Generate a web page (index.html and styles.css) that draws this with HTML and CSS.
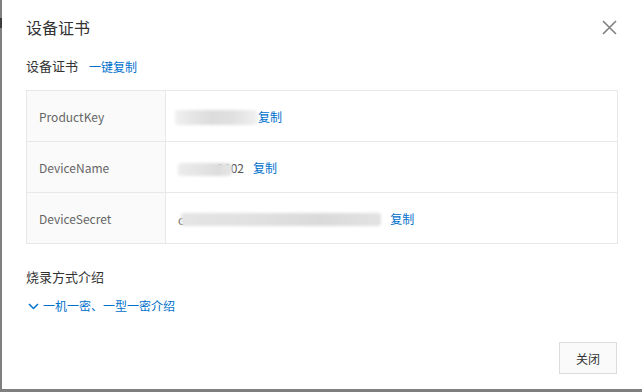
FILE: index.html
```html
<!DOCTYPE html>
<html lang="zh-CN">
<head>
<meta charset="utf-8">
<title>设备证书</title>
<link rel="stylesheet" href="styles.css">
</head>
<body>
<div class="dialog">
  <div class="header">
    <span class="title">设备证书</span>
    <svg class="close" width="15" height="15" viewBox="0 0 15 15"><path d="M1 1L14 14M14 1L1 14" stroke="#808080" stroke-width="1.6" fill="none"/></svg>
  </div>
  <div class="section-title">设备证书<a class="link copy-all">一键复制</a></div>
  <table class="cert">
    <tr>
      <td class="label">ProductKey</td>
      <td class="value"><span class="mask mask-1"></span><a class="link">复制</a></td>
    </tr>
    <tr>
      <td class="value-label label">DeviceName</td>
      <td class="value"><span class="masked-text"><span class="tail">2002</span><span class="mask mask-2"></span></span><a class="link">复制</a></td>
    </tr>
    <tr>
      <td class="label">DeviceSecret</td>
      <td class="value"><span class="lead">c</span><span class="mask mask-3"></span><a class="link">复制</a></td>
    </tr>
  </table>
  <div class="sub-title">烧录方式介绍</div>
  <div class="toggle"><svg width="11" height="7" viewBox="0 0 11 7"><path d="M1 1L5.5 5.5L10 1" stroke="#0070cc" stroke-width="1.5" fill="none"/></svg><span>一机一密、一型一密介绍</span></div>
  <div class="footer"><button class="btn">关闭</button></div>
</div>
</body>
</html>
```
FILE: styles.css
```css
html, body {
  margin: 0;
  padding: 0;
}
body {
  width: 642px;
  height: 392px;
  overflow: hidden;
  background: linear-gradient(to bottom, #7f7f7f 0, #7f7f7f 18px, #3c3c3c 18px, #3c3c3c 28px, #7f7f7f 28px);
  font-family: "Noto Sans CJK SC", "Noto Sans", sans-serif;
  color: #333;
}
.dialog {
  margin-left: 2px;
  height: 389px;
  background: #fff;
  padding: 0 25px 0 24px;
  box-sizing: border-box;
  display: flex;
  flex-direction: column;
}
.header {
  height: 54px;
  display: flex;
  align-items: center;
  justify-content: space-between;
}
.title {
  font-size: 16px;
  color: #333;
  line-height: 20px;
}
.section-title {
  height: 24px;
  line-height: 24px;
  font-size: 13px;
  color: #333;
  display: flex;
  align-items: center;
}
.link {
  color: #0070cc;
  font-size: 12px;
  cursor: pointer;
}
.copy-all {
  margin-left: 11px;
  margin-top: 2px;
}
.cert {
  margin-top: 12px;
  border-collapse: collapse;
  width: 592px;
  font-size: 12px;
}
.cert td {
  border: 1px solid #e8e8e8;
  height: 51px;
  padding: 0;
  box-sizing: border-box;
}
.label {
  width: 139px;
  background: #fafafa;
  padding-left: 12px !important;
  color: #666;
  font-size: 12px;
}
.value {
  padding-left: 9px !important;
  color: #333;
}
.value > * {
  vertical-align: middle;
}
.mask {
  display: inline-block;
  height: 15px;
  filter: blur(1.5px);
  border-radius: 3px;
}
.mask-1 {
  width: 82px;
  background: linear-gradient(to right, #f0f0f0 0, #e6e6e6 20%, #dcdcdc 45%, #e0e0e0 70%, #f0f0f0 100%);
  margin-right: 1px;
}
.masked-text {
  display: inline-block;
  position: relative;
  width: 66px;
  height: 16px;
  margin-left: 3px;
  margin-right: 9px;
}
.tail {
  position: absolute;
  right: 0;
  top: 0;
  font-size: 12px;
  line-height: 16px;
  color: #555;
}
.mask-2 {
  position: absolute;
  left: 0;
  top: 3px;
  width: 54px;
  height: 13px;
  background: linear-gradient(to right, #ececec 0, #e2e2e2 50%, #dcdcdc 75%, #e8e8e8 100%);
}
.lead {
  margin-left: 3px;
  color: #666;
}
.mask-3 {
  width: 200px;
  height: 13px;
  margin-left: -3px;
  margin-right: 9px;
  background: linear-gradient(to right, #e4e4e4 0, #e0e0e0 40%, #dadada 70%, #e2e2e2 100%);
}
.sub-title {
  margin-top: 23px;
  line-height: 20px;
  font-size: 13px;
  color: #333;
}
.toggle {
  margin-top: 9px;
  line-height: 20px;
  font-size: 12px;
  color: #0070cc;
  display: flex;
  align-items: center;
  gap: 4px;
  padding-left: 2px;
}
.footer {
  margin-top: 26px;
  display: flex;
  justify-content: flex-end;
}
.btn {
  width: 58px;
  height: 32px;
  border: 1px solid #dcdcdc;
  background: #fafafa;
  font-family: "Noto Sans CJK SC", sans-serif;
  font-size: 12px;
  color: #333;
  padding: 0;
}
```
